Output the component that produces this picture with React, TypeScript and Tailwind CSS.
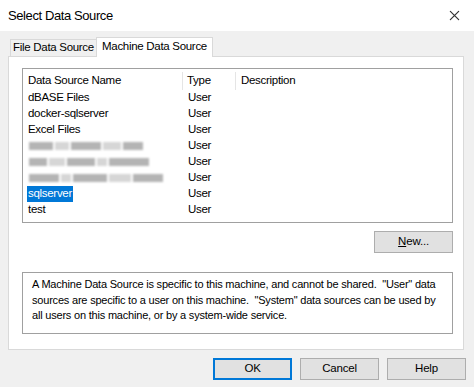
import { IoCloseOutline } from "react-icons/io5";

const rows = [
  { name: "dBASE Files", type: "User" },
  { name: "docker-sqlserver", type: "User" },
  { name: "Excel Files", type: "User" },
  { name: "", type: "User", blur: [24, 14, 30, 18, 20] },
  { name: "", type: "User", blur: [18, 16, 28, 10, 40] },
  { name: "", type: "User", blur: [30, 10, 34, 22, 30] },
  { name: "sqlserver", type: "User", selected: true },
  { name: "test", type: "User" },
];

const Btn = ({ label, primary }: { label: React.ReactNode; primary?: boolean }) => (
  <div
    className={`w-[79px] h-[22px] flex items-center justify-center bg-[#e1e1e1] border text-[11.5px] tracking-[-0.2px] ${
      primary ? "border-[#0078d7] border-2" : "border-[#adadad]"
    }`}
  >
    {label}
  </div>
);

const App = () => {
  return (
    <div
      className="w-[474px] h-[387px] bg-[#f0f0f0] flex flex-col text-black overflow-hidden"
      style={{ fontFamily: "'Liberation Sans', Arial, sans-serif" }}
    >
      {/* title bar */}
      <div className="h-[31px] bg-white flex items-center justify-between pl-[8px] pr-[10px] shrink-0">
        <span className="text-[13px] tracking-[-0.4px]">Select Data Source</span>
        <IoCloseOutline className="text-[19px] text-[#333]" />
      </div>

      {/* tabs */}
      <div className="flex items-end h-[25px] pl-[10px] shrink-0 text-[11.5px] tracking-[-0.3px]">
        <div className="h-[17px] w-[87px] flex items-center justify-center bg-[#f0f0f0] border border-b-0 border-[#d9d9d9] -mr-px">
          File Data Source
        </div>
        <div className="h-[20px] w-[117px] pb-[2px] flex items-center justify-center bg-white border border-b-0 border-[#d9d9d9] relative z-10 -mb-px">
          Machine Data Source
        </div>
      </div>

      {/* tab panel */}
      <div className="ml-[8px] w-[456px] h-[294px] bg-white border border-[#d9d9d9] shrink-0 pl-[13px] pt-[11px]">
        {/* list */}
        <div className="w-[431px] h-[155px] border border-[#a0a0a0] text-[11.5px] tracking-[-0.3px] relative">
          <div className="flex h-[21px] items-center pt-[3px]">
            <div className="w-[160px] pl-[5px] h-full flex items-center border-r border-[#e5e5e5]">Data Source Name</div>
            <div className="w-[53px] pl-[4px] h-full flex items-center border-r border-[#e5e5e5]">Type</div>
            <div className="flex-1 pl-[5px] h-full flex items-center">Description</div>
          </div>
          {rows.map((row, index) => (
            <div key={index} className="flex h-[16px] items-center">
              <div className="w-[160px] pl-[4px] h-full flex items-center">
                {row.blur ? (
                  <div className="flex gap-[2px] pl-[2px] blur-[1px]">
                    {row.blur.map((w, i) => (
                      <div
                        key={i}
                        className={`h-[8px] ${i % 2 === 0 ? "bg-[#b4b4b4]" : "bg-[#d6d6d6]"}`}
                        style={{ width: w }}
                      />
                    ))}
                  </div>
                ) : (
                  <span
                    className={`px-[1px] h-[16px] flex items-center ${
                      row.selected ? "bg-[#0078d7] text-white" : ""
                    }`}
                  >
                    {row.name}
                  </span>
                )}
              </div>
              <div className="pl-[5px]">{row.type}</div>
            </div>
          ))}
        </div>

        <div className="flex justify-end w-[431px] mt-[8px]">
          <div className="w-[79px] h-[22px] flex items-center justify-center bg-[#e1e1e1] border border-[#adadad] text-[11.5px] tracking-[-0.2px]">
            <span>
              <span className="underline">N</span>ew...
            </span>
          </div>
        </div>

        {/* description */}
        <div className="mt-[19px] w-[431px] h-[62px] border border-[#a0a0a0] px-[9px] pt-[4px] text-[11px] tracking-[-0.2px] leading-[15.5px] whitespace-nowrap">
          A Machine Data Source is specific to this machine, and cannot be shared. &nbsp;"User" data
          <br />
          sources are specific to a user on this machine. &nbsp;"System" data sources can be used by
          <br />
          all users on this machine, or by a system-wide service.
        </div>
      </div>

      {/* bottom buttons */}
      <div className="flex justify-end gap-[8px] pr-[8px] mt-[8px]">
        <Btn label="OK" primary />
        <Btn label="Cancel" />
        <Btn label="Help" />
      </div>
    </div>
  );
};

export default App;
